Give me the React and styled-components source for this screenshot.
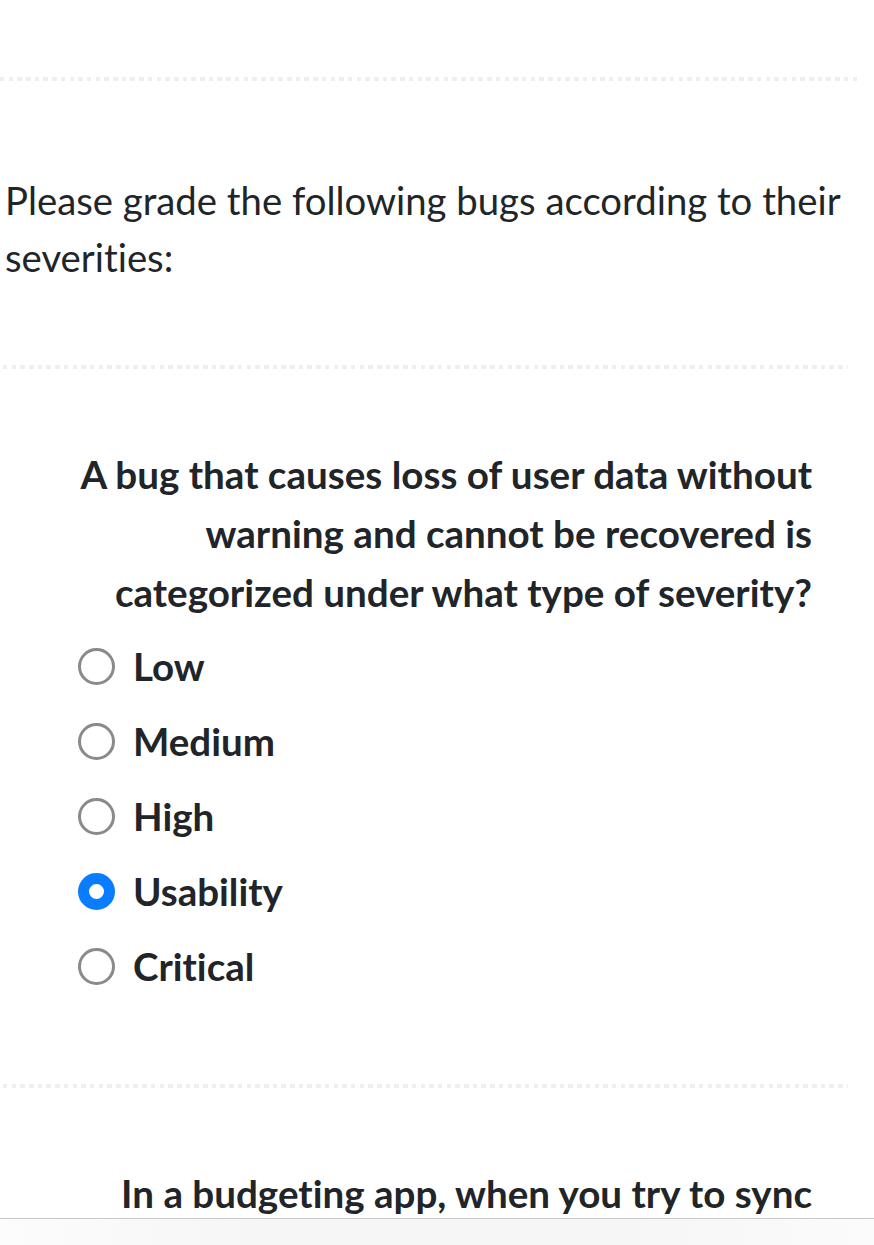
import React, { useState } from "react";
import styled, { createGlobalStyle } from "styled-components";

const GlobalStyle = createGlobalStyle`
  html, body {
    margin: 0;
    padding: 0;
    background: #ffffff;
  }
  body {
    font-family: "Lato", "Noto Sans", sans-serif;
    font-variant-ligatures: none;
    color: #212529;
  }
`;

const Page = styled.div`
  padding-top: 77px;
  padding-bottom: 120px;
`;

const Divider = styled.div`
  height: 4px;
  margin: ${(p) => p.margin || "0"};
  background-image: repeating-linear-gradient(
    to right,
    #edf0f2 0,
    #edf0f2 4.5px,
    transparent 4.5px,
    transparent 8.7px
  );
`;

const Intro = styled.p`
  margin: 91px 0 79px 5px;
  font-size: 38.3px;
  line-height: 57px;
  font-weight: 400;
  padding-right: 20px;
`;

const Question = styled.section`
  padding: 76px 62px 0 60px;
`;

const Prompt = styled.h2`
  margin: 0 0 8px;
  font-size: 38.6px;
  line-height: 59px;
  font-weight: 700;
  text-align: right;
`;

const Options = styled.div`
  display: flex;
  flex-direction: column;
  gap: 3px;
  padding-left: 18px;
`;

const Option = styled.label`
  display: flex;
  align-items: center;
  gap: 18px;
  height: 72px;
  font-size: 38.5px;
  font-weight: 700;
  cursor: pointer;
`;

const Radio = styled.span`
  box-sizing: border-box;
  flex: none;
  width: 37px;
  height: 37px;
  border-radius: 50%;
  background: #fff;
  border: ${(p) => (p.checked ? "11px solid #0a7cff" : "3px solid #8a8a8a")};
`;

const Footer = styled.div`
  position: fixed;
  left: 0;
  right: 0;
  bottom: 0;
  height: 26px;
  border-top: 1.5px solid #c8c8c8;
  background: linear-gradient(to right, #fcfcfc, #f6f6f6 30%, #f6f6f6 70%, #fbfbfb);
`;

const QUESTIONS = [
  {
    text: "A bug that causes loss of user data without warning and cannot be recovered is categorized under what type of severity?",
    options: ["Low", "Medium", "High", "Usability", "Critical"],
    selected: "Usability",
  },
  {
    text: "In a budgeting app, when you try to sync your bank account the app freezes and has to be restarted. What severity is this?",
    options: ["Low", "Medium", "High", "Usability", "Critical"],
    selected: null,
  },
];

const QuestionBlock = ({ item }) => {
  const [value, setValue] = useState(item.selected);
  return (
    <Question>
      <Prompt>{item.text}</Prompt>
      <Options>
        {item.options.map((opt) => (
          <Option key={opt} onClick={() => setValue(opt)}>
            <Radio checked={value === opt} />
            {opt}
          </Option>
        ))}
      </Options>
    </Question>
  );
};

const App = () => {
  return (
    <>
      <GlobalStyle />
      <Page>
        <Divider margin="0 14px 0 0" />
        <Intro>Please grade the following bugs according to their severities:</Intro>
        <Divider margin="0 26px 0 3px" />
        {QUESTIONS.map((q, i) => (
          <React.Fragment key={i}>
            {i > 0 && <Divider margin="82px 26px 0 3px" />}
            <QuestionBlock item={q} />
          </React.Fragment>
        ))}
      </Page>
      <Footer />
    </>
  );
};

export default App;
